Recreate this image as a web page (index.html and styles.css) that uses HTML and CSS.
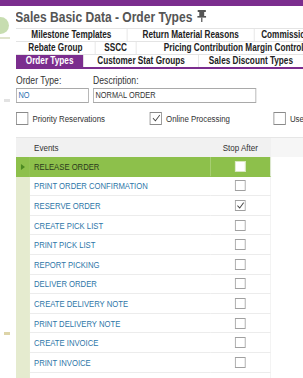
FILE: index.html
```html
<!DOCTYPE html>
<html>
<head>
<meta charset="utf-8">
<link rel="stylesheet" href="styles.css">
</head>
<body>
<div class="topbar"></div>
<div class="page">
  <div class="side">
    <div class="logo"></div>
    <div class="logo-text"></div>
    <div class="side-mark m1"></div>
    <div class="side-mark m2"></div>
  </div>
  <div class="main">
    <div class="title-row">
      <h1 class="title">Sales Basic Data - Order Types</h1>
      <svg class="pin" width="11" height="12" viewBox="0 0 11 12">
        <rect x="0.5" y="0" width="10" height="2" fill="#555"/>
        <rect x="2.5" y="2" width="6" height="4" fill="#555"/>
        <rect x="0" y="6" width="11" height="1.6" fill="#555"/>
        <rect x="4.8" y="7.6" width="1.5" height="4.4" fill="#555"/>
      </svg>
    </div>
    <div class="tabs">
      <div class="tab-row">
        <div class="tab t-ms">Milestone Templates</div>
        <div class="tab t-rm">Return Material Reasons</div>
        <div class="tab t-cm">Commissions</div>
      </div>
      <div class="tab-row">
        <div class="tab t-rg">Rebate Group</div>
        <div class="tab t-ss">SSCC</div>
        <div class="tab t-pc">Pricing Contribution Margin Control</div>
      </div>
      <div class="tab-row last">
        <div class="tab t-ot active">Order Types</div>
        <div class="tab t-cs">Customer Stat Groups</div>
        <div class="tab t-sd">Sales Discount Types</div>
      </div>
    </div>
    <div class="fields">
      <div class="field f-type">
        <label class="lbl">Order Type:</label>
        <div class="input code">NO</div>
      </div>
      <div class="field f-desc">
        <label class="lbl">Description:</label>
        <div class="input">NORMAL ORDER</div>
      </div>
    </div>
    <div class="checks">
      <div class="chk c1"><span class="box"></span><span>Priority Reservations</span></div>
      <div class="chk c2"><span class="box"><svg width="12" height="10" viewBox="0 0 12 10"><path d="M2 5.2 L5 7.8 L10.4 2" fill="none" stroke="#444" stroke-width="1.1"/></svg></span><span>Online Processing</span></div>
      <div class="chk c3"><span class="box"></span><span>Use</span></div>
    </div>
    <div class="grid">
      <div class="grow head">
        <div class="ind"></div>
        <div class="ev">Events</div>
        <div class="st">Stop After</div>
        <div class="fill"></div>
      </div>
      <div class="grow sel">
        <div class="ind"><span class="tri"></span></div>
        <div class="ev">RELEASE ORDER</div>
        <div class="st"><span class="cb"></span></div>
      </div>
      <div class="grow"><div class="ind"></div><div class="ev">PRINT ORDER CONFIRMATION</div><div class="st"><span class="cb"></span></div></div>
      <div class="grow"><div class="ind"></div><div class="ev">RESERVE ORDER</div><div class="st"><span class="cb"><svg width="11" height="9" viewBox="0 0 11 9"><path d="M2 4.6 L4.8 7 L9.6 1.6" fill="none" stroke="#444" stroke-width="1.1"/></svg></span></div></div>
      <div class="grow"><div class="ind"></div><div class="ev">CREATE PICK LIST</div><div class="st"><span class="cb"></span></div></div>
      <div class="grow"><div class="ind"></div><div class="ev">PRINT PICK LIST</div><div class="st"><span class="cb"></span></div></div>
      <div class="grow"><div class="ind"></div><div class="ev">REPORT PICKING</div><div class="st"><span class="cb"></span></div></div>
      <div class="grow"><div class="ind"></div><div class="ev">DELIVER ORDER</div><div class="st"><span class="cb"></span></div></div>
      <div class="grow"><div class="ind"></div><div class="ev">CREATE DELIVERY NOTE</div><div class="st"><span class="cb"></span></div></div>
      <div class="grow"><div class="ind"></div><div class="ev">PRINT DELIVERY NOTE</div><div class="st"><span class="cb"></span></div></div>
      <div class="grow"><div class="ind"></div><div class="ev">CREATE INVOICE</div><div class="st"><span class="cb"></span></div></div>
      <div class="grow"><div class="ind"></div><div class="ev">PRINT INVOICE</div><div class="st"><span class="cb"></span></div></div>
      <div class="grow"><div class="ind"></div><div class="ev"></div><div class="st"></div></div>
    </div>
  </div>
</div>
</body>
</html>
```

FILE: styles.css
```css
* { box-sizing: border-box; }
html, body { margin: 0; padding: 0; }
body {
  width: 303px;
  height: 378px;
  overflow: hidden;
  background: #fff;
  font-family: "Liberation Sans", Arial, sans-serif;
  color: #333;
}
.topbar { height: 6px; background: #7b2d8e; }
.page { display: flex; width: 303px; overflow: hidden; }
.side { width: 16px; flex: none; display: flex; flex-direction: column; align-items: flex-start; }
.logo { width: 9px; height: 17px; margin-top: 11px; background: #b9d49c; border-radius: 0 9px 9px 0; opacity: 0.8; }
.logo-text { width: 10px; height: 2px; margin-top: 3px; background: #dfe4cc; }
.side-mark { width: 6px; height: 3px; background: #e2e2e2; }
.m1 { margin-top: 60px; margin-left: 4px; }
.m2 { margin-top: 230px; margin-left: 4px; background: #ddd4a8; }

/* the captured UI is horizontally compressed; lay it out at natural width and squeeze */
.main {
  width: 350px; flex: none; overflow: hidden;
  transform: scaleX(0.82); transform-origin: 0 0;
}

.title-row { height: 22px; display: flex; align-items: center; gap: 6px; margin-left: -1px; }
.title { margin: 0; font-size: 14.7px; font-weight: bold; color: #555; white-space: nowrap; line-height: 22px; }
.pin { flex: none; margin-top: -3px; }

.tabs { border-bottom: 2px solid #7b2d8e; }
.tab-row { display: flex; height: 13px; border-top: 1px solid #e4e4e4; white-space: nowrap; }
.tab {
  flex: none; font-size: 10px; font-weight: bold; color: #222;
  text-align: center; line-height: 12px; border-left: 1px solid #e2e2e2;
}
.tab:first-child { border-left: none; }
.t-ms { width: 135px; }
.t-rm { width: 155px; }
.t-cm { width: 90px; text-align: left; padding-left: 8px; }
.t-rg { width: 96px; }
.t-ss { width: 50px; }
.t-pc { width: 238px; }
.t-ot { width: 82px; }
.t-cs { width: 140px; }
.t-sd { width: 128px; }
.tab.active { background: #7b2d8e; color: #fff; }

.fields { display: flex; gap: 5px; margin-top: 5px; }
.field { display: flex; flex-direction: column; }
.lbl { font-size: 10.5px; line-height: 12px; color: #333; margin-bottom: 2px; }
.input {
  height: 15px; border: 1px solid #a9a9a9; font-size: 9px; line-height: 13px;
  padding-left: 2px; color: #333; background: #fff;
}
.f-type { width: 89px; }
.f-desc { width: 199px; }
.input.code { color: #2b6fb0; }

.checks { display: flex; height: 14px; margin-top: 8px; align-items: center; }
.chk { display: flex; align-items: center; gap: 5px; font-size: 9.6px; color: #333; flex: none; white-space: nowrap; }
.c1 { width: 163px; }
.c2 { width: 151px; }
.box { width: 15px; height: 13px; border: 1px solid #8a8a8a; display: inline-flex; align-items: center; justify-content: center; background: #fff; flex: none; }

.grid { margin-top: 12px; border-top: 1px solid #e6e6e6; width: 350px; }
.grow { display: flex; height: 19.6px; align-items: stretch; }
.grow .ind { width: 17px; flex: none; background: #e5ebcf; display: flex; align-items: center; justify-content: center; }
.grow .ev {
  width: 219.5px; flex: none; font-size: 9.4px; color: #2e76a8; padding-left: 5px;
  display: flex; align-items: center; border-bottom: 1px solid #ececec; white-space: nowrap;
}
.grow .st {
  width: 74px; flex: none; display: flex; align-items: center; justify-content: center;
  border-bottom: 1px solid #ececec; border-right: 1px solid #f0f0f0;
}
.cb { width: 13px; height: 11px; border: 1px solid #a0a0a0; background: #fff; display: inline-flex; align-items: center; justify-content: center; }
.grow.head { background: #f1f1f1; height: 19px; }
.grow.head .ind { background: #f1f1f1; }
.grow.head .ev { color: #333; font-size: 9.8px; border-bottom: none; }
.grow.head .st { font-size: 9.8px; color: #333; border-bottom: none; border-right: none; }
.grow.head .fill { flex: 1; background: #f6f6f6; }
.grow.sel .ind, .grow.sel .ev, .grow.sel .st { background: #8dc04b; border-bottom-color: #8dc04b; }
.grow.sel .ev { color: #2b3a1c; }
.grow.sel .cb { border-color: #d8e8c0; }
.tri { width: 0; height: 0; border-left: 5px solid #4c8a22; border-top: 3px solid transparent; border-bottom: 3px solid transparent; }
```
